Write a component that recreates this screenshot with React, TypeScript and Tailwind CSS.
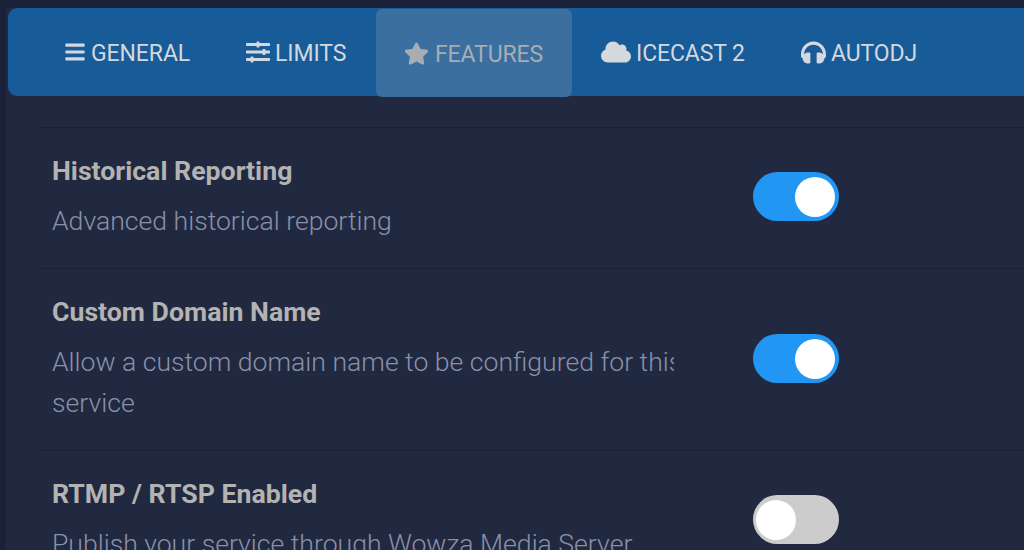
import { FaBars, FaSlidersH, FaStar, FaCloud, FaHeadphones } from "react-icons/fa";

const tabs = [
  { label: "GENERAL", icon: <FaBars className="text-[22px]" />, cls: "w-[196px] pl-[56px] gap-[5px]", active: false },
  { label: "LIMITS", icon: <FaSlidersH className="text-[24px]" />, cls: "w-[172px] pl-[42px] gap-[5px]", active: false },
  { label: "FEATURES", icon: <FaStar className="text-[25px]" />, cls: "w-[196px] pl-[28px] gap-[6px] mt-[1px] h-[88px]", active: true },
  { label: "ICECAST 2", icon: <FaCloud className="text-[30px]" />, cls: "w-[200px] pl-[29px] gap-[5px]", active: false },
  { label: "AUTODJ", icon: <FaHeadphones className="text-[25px]" />, cls: "w-[200px] pl-[29px] gap-[5px]", active: false },
];

function Toggle({ on }: { on: boolean }) {
  return (
    <div className={`flex h-[49px] w-[86px] shrink-0 items-center rounded-full ${on ? "justify-end bg-[#2196f3] pr-[4px]" : "justify-start bg-[#cccccc] pl-[3px]"}`}>
      <div className="h-[40px] w-[40px] rounded-full bg-white" />
    </div>
  );
}

function Row({ title, desc, on, cls, toggleCls }: { title: string; desc: string; on: boolean; cls: string; toggleCls: string }) {
  return (
    <div className={`flex border-b border-[#1a2136] pl-[15px] ${cls}`}>
      <div className="w-[622px] shrink-0 overflow-hidden">
        <div className="w-[640px]">
          <div className="mt-[25px] text-[26.7px] leading-[36px] font-bold text-[#b3b3b3]">{title}</div>
          <div className="mt-[11px] text-[26.6px] leading-[41px] font-light text-[#8a90a8]">{desc}</div>
        </div>
      </div>
      <div className={`ml-[79px] ${toggleCls}`}>
        <Toggle on={on} />
      </div>
    </div>
  );
}

export default function App() {
  return (
    <div className="h-[550px] w-[1024px] overflow-hidden bg-[#1b2139] font-['Roboto',sans-serif]">
      <div className="ml-[6px] mt-[8px] h-[542px] bg-[#212940]">
        <div className="ml-[2px] flex h-[88px] rounded-l-[9px] bg-[#175c99]">
          {tabs.map((t) => (
            <div
              key={t.label}
              className={`flex shrink-0 items-center text-[23px] tracking-[-0.1px] ${t.cls} ${t.active ? "rounded-[6px] bg-[#3a6f9f] text-[#a8adb2]" : "text-[#d5d8dc]"}`}
            >
              {t.icon}
              <span className="pt-[5px]">{t.label}</span>
            </div>
          ))}
        </div>
        <div className="ml-[31px] h-[32px] border-b border-[#1a2136]" />
        <Row title="Historical Reporting" desc="Advanced historical reporting" on cls="ml-[31px] h-[141px]" toggleCls="mt-[44px]" />
        <Row title="Custom Domain Name" desc="Allow a custom domain name to be configured for this service" on cls="ml-[31px] h-[182px]" toggleCls="mt-[65px]" />
        <Row title="RTMP / RTSP Enabled" desc="Publish your service through Wowza Media Server" on={false} cls="ml-[31px] h-[182px]" toggleCls="mt-[44px]" />
      </div>
    </div>
  );
}
